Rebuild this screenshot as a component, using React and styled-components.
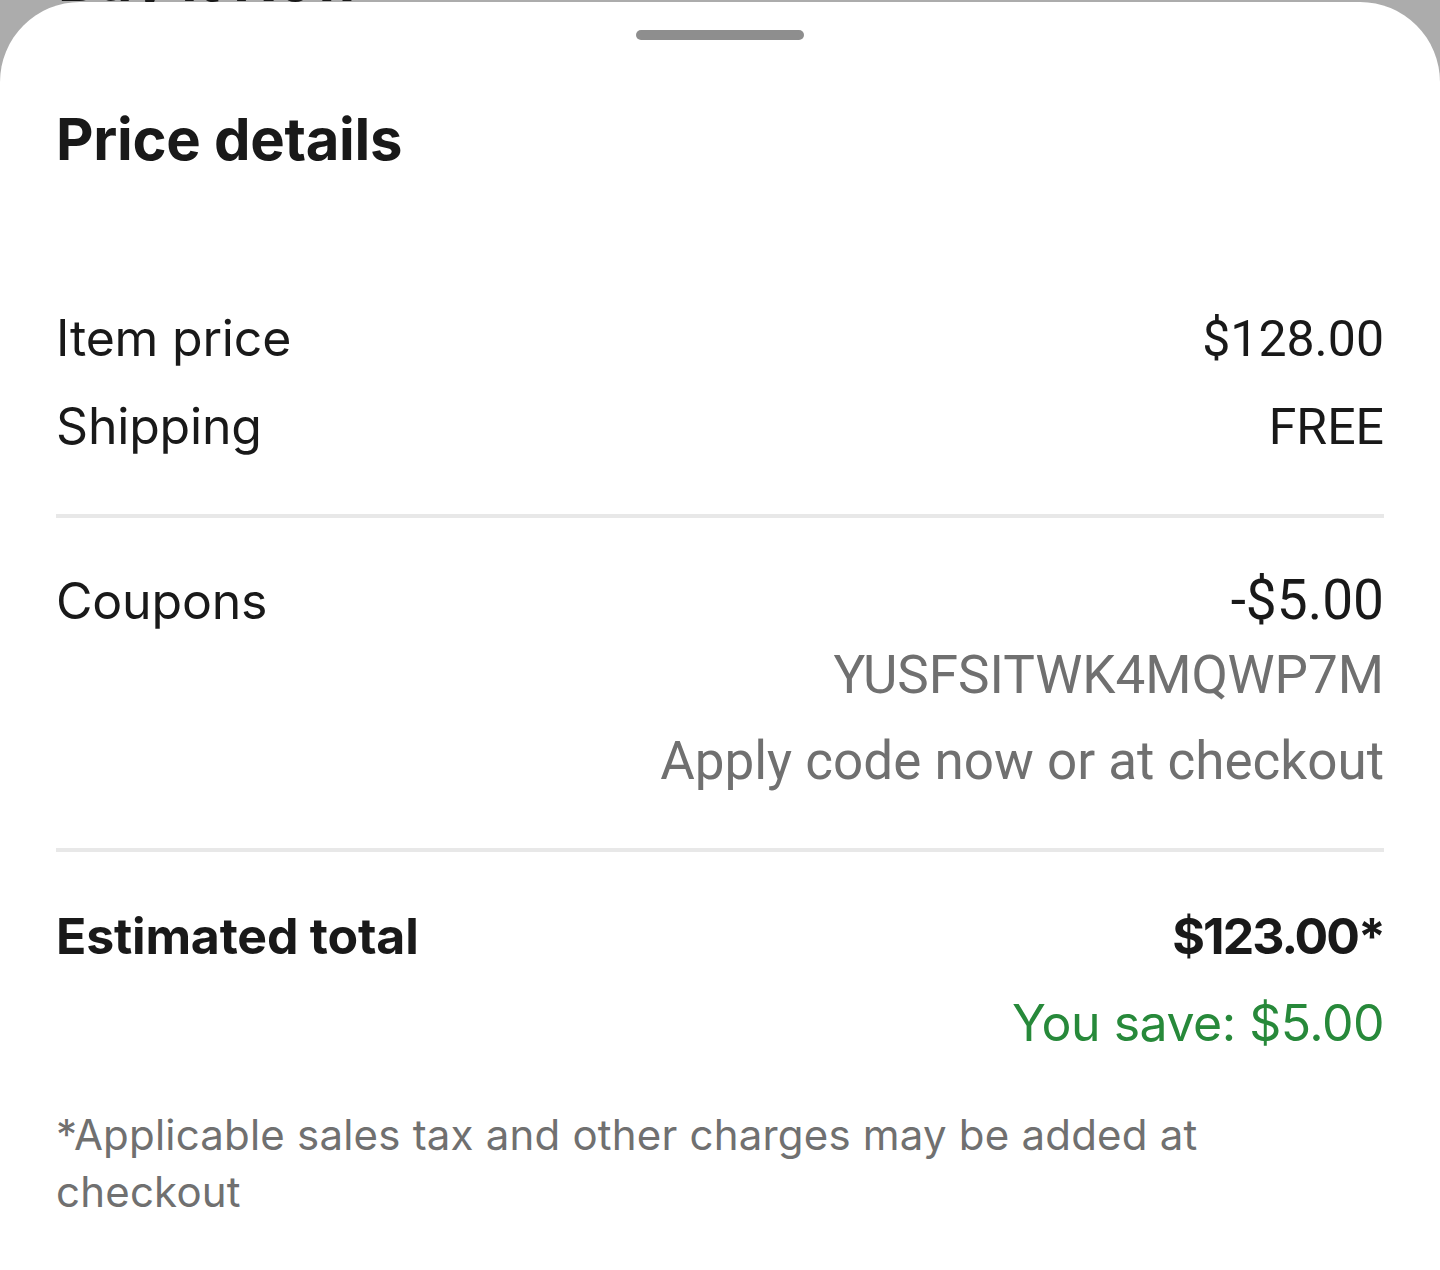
import React from "react";
import styled, { createGlobalStyle } from "styled-components";

const Global = createGlobalStyle`
  html, body { margin: 0; padding: 0; }
  body {
    background: #acacac;
    font-family: Inter, "Noto Sans", sans-serif;
    color: #191919;
    -webkit-font-smoothing: antialiased;
  }
`;

const Page = styled.div`
  width: 1440px;
  min-height: 1270px;
  display: flex;
  flex-direction: column;
  overflow: hidden;
`;

const Peek = styled.div`
  height: 2px;
  overflow: hidden;
  padding-left: 58px;
`;

const PeekText = styled.div`
  font-family: Inter, sans-serif;
  font-weight: 700;
  font-size: 58px;
  line-height: 58px;
  margin-top: -49px;
  color: #191919;
  white-space: nowrap;
`;

const Sheet = styled.div`
  flex: 1;
  background: #ffffff;
  border-radius: 80px 80px 0 0;
  padding: 0 56px;
  display: flex;
  flex-direction: column;
`;

const Handle = styled.div`
  width: 168px;
  height: 10px;
  border-radius: 5px;
  background: #8e8e8e;
  margin: 28px auto 0;
`;

const Title = styled.h1`
  margin: 64px 0 0 0;
  font-family: Inter, sans-serif;
  font-weight: 700;
  font-size: 58px;
  line-height: 70px;
  letter-spacing: -0.3px;
  color: #191919;
`;

const Section = styled.div`
  display: flex;
  flex-direction: column;
  padding: ${(p) => p.$top}px 0 ${(p) => p.$bottom}px;
`;

const Row = styled.div`
  display: flex;
  justify-content: space-between;
  align-items: baseline;
`;

const Label = styled.div`
  font-family: Inter, sans-serif;
  font-size: 50px;
  font-weight: ${(p) => (p.$bold ? 700 : 400)};
  line-height: 87px;
  letter-spacing: -0.2px;
  color: #191919;
`;

const Values = styled.div`
  display: flex;
  flex-direction: column;
  align-items: flex-end;
`;

const Value = styled.div`
  font-family: Roboto, "Liberation Sans", sans-serif;
  font-size: ${(p) => p.$size || 50}px;
  line-height: ${(p) => p.$lh || 87}px;
  margin-top: ${(p) => p.$mt || 0}px;
  color: ${(p) => p.$color || "#191919"};
  white-space: nowrap;
`;

const TotalValue = styled.div`
  font-family: Inter, sans-serif;
  font-weight: 700;
  font-size: 50px;
  line-height: 87px;
  letter-spacing: -2px;
  color: #191919;
`;

const Savings = styled.div`
  font-family: Inter, sans-serif;
  font-size: 50px;
  line-height: 87px;
  letter-spacing: -0.5px;
  color: #27893a;
`;

const Divider = styled.hr`
  margin: 0;
  border: none;
  height: 4px;
  background: #e8e8e8;
`;

const Footnote = styled.p`
  margin: 39px 0 0 0;
  font-family: Inter, sans-serif;
  font-size: 42px;
  line-height: 57px;
  letter-spacing: 0.2px;
  color: #707070;
  max-width: 1240px;
`;

export default function App() {
  return (
    <>
      <Global />
      <Page>
        <Peek>
          <PeekText>Buy It Now</PeekText>
        </Peek>
        <Sheet>
          <Handle />
          <Title>Price details</Title>

          <Section $top={121} $bottom={43}>
            <Row>
              <Label>Item price</Label>
              <Value>$128.00</Value>
            </Row>
            <Row>
              <Label>Shipping</Label>
              <Value>FREE</Value>
            </Row>
          </Section>

          <Divider />

          <Section $top={40} $bottom={49}>
            <Row>
              <Label>Coupons</Label>
              <Values>
                <Value $size={55} $lh={75}>-$5.00</Value>
                <Value $size={53} $lh={75} $color="#707070">YUSFSITWK4MQWP7M</Value>
                <Value $size={53} $lh={75} $mt={11} $color="#707070">
                  Apply code now or at checkout
                </Value>
              </Values>
            </Row>
          </Section>

          <Divider />

          <Section $top={41} $bottom={0}>
            <Row>
              <Label $bold>Estimated total</Label>
              <Values>
                <TotalValue>$123.00*</TotalValue>
                <Savings>You save: $5.00</Savings>
              </Values>
            </Row>
          </Section>

          <Footnote>
            *Applicable sales tax and other charges may be added at checkout
          </Footnote>
        </Sheet>
      </Page>
    </>
  );
}
